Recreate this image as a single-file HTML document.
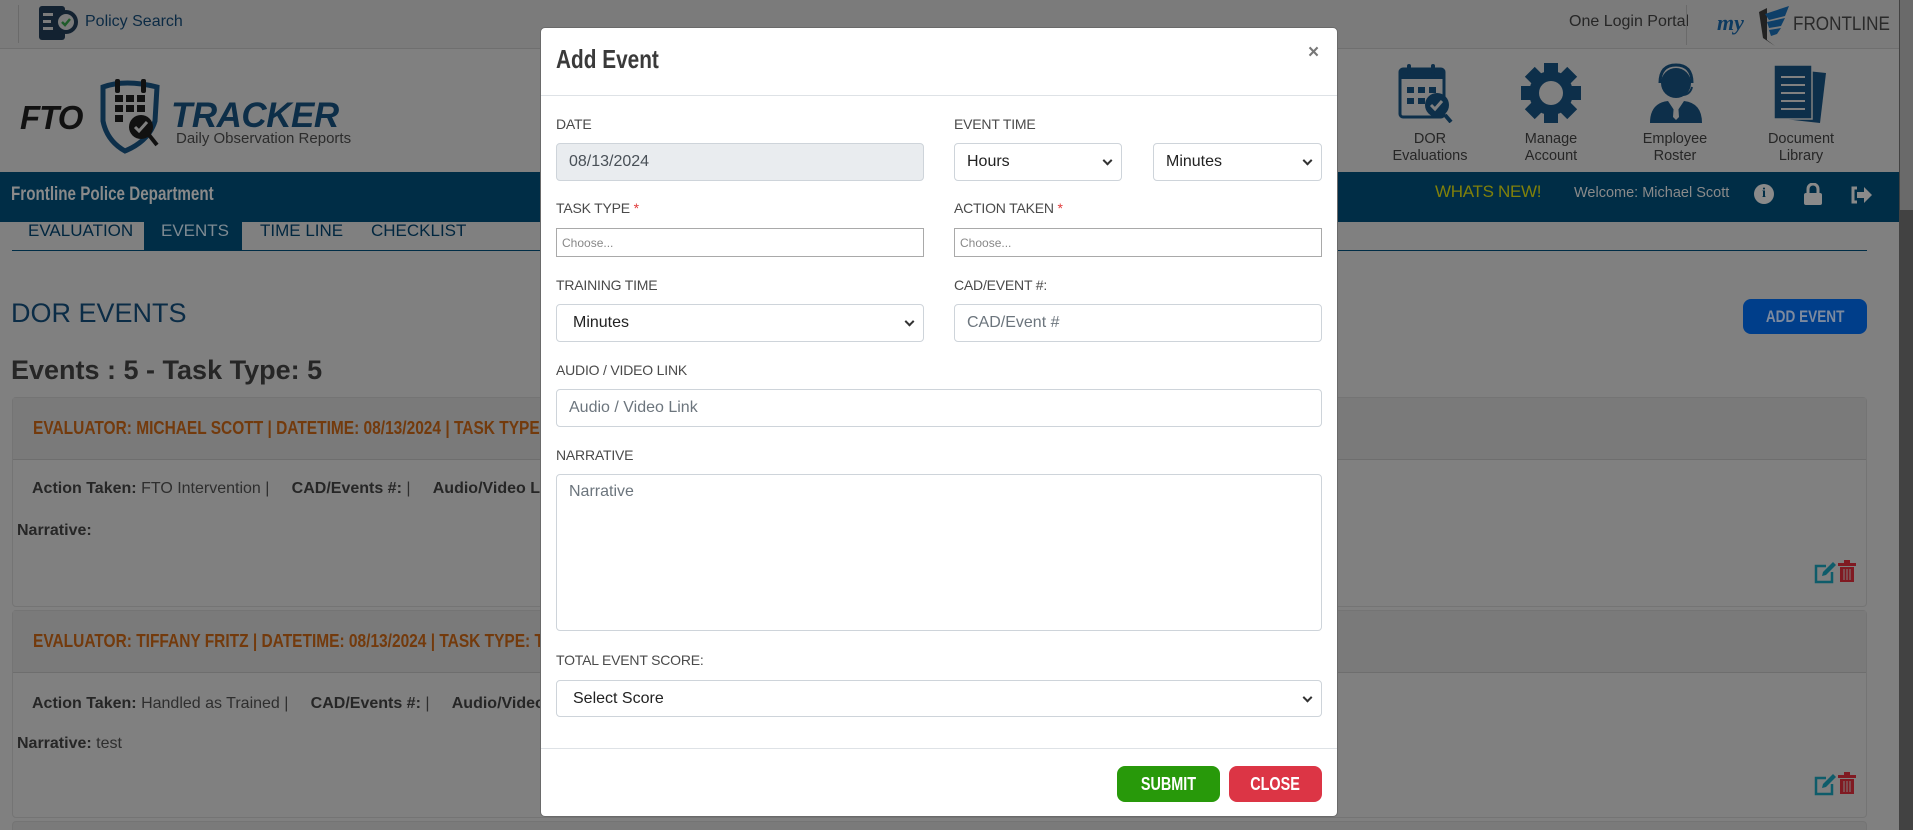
<!DOCTYPE html>
<html><head><meta charset="utf-8">
<style>
*{box-sizing:border-box;margin:0;padding:0}
html,body{width:1913px;height:830px;overflow:hidden}
body{background:#808080;font-family:"Liberation Sans",Arial,sans-serif;position:relative}
#w{position:absolute;left:0;top:0;width:1913px;height:830px;overflow:hidden}
.a{position:absolute;white-space:nowrap}
.cond{font-weight:bold;display:inline-block;transform:scaleX(.8);transform-origin:left center}
.cc{font-weight:bold;display:inline-block;transform:scaleX(.8);transform-origin:center center}
.lbl{position:absolute;font-size:14px;color:#4a4a4a;letter-spacing:-0.2px;white-space:nowrap}
.inp{position:absolute;border:1px solid #ced4da;border-radius:4px;background:#fff;font-size:16px;color:#495057;padding-left:12px;display:flex;align-items:center}
.sel::after{content:"";position:absolute;right:10px;top:50%;width:5px;height:5px;border-right:2px solid #333;border-bottom:2px solid #333;transform:translateY(-70%) rotate(45deg)}
.choose{position:absolute;border:1px solid #a9a9a9;background:#fff;font-size:12px;color:#888;padding-left:5px;display:flex;align-items:center}
.star{color:#e03a3a}
.card{position:absolute;left:12px;width:1855px;border:1px solid #747474;border-radius:4px;background:#808080}
.ch{height:62px;background:#7a7a7a;border-bottom:1px solid #6e6e6e;position:relative}
.ct{position:absolute;left:20px;top:20px;color:#733a0c;font-size:18px;white-space:nowrap}
.ct .cond{transform:scaleX(.86)}
.b{font-weight:bold;color:#262626}
.t{color:#2e2e2e}
.nav{position:absolute;top:221px;font-size:17px;color:#00263f}
</style></head><body><div id="w">
<div class="a" style="left:0;top:0;width:1899px;height:49px;background:#7b7b7b;border-bottom:1px solid #6f6f6f"></div>
<div class="a" style="left:18px;top:5px;width:1px;height:38px;background:#6a6a6a"></div>
<svg class="a" style="left:38px;top:5px" width="42" height="36" viewBox="0 0 42 36"><rect x="1" y="1" width="26" height="34" rx="3" fill="#132231"/><rect x="5" y="8" width="10" height="3" fill="#7b7b7b"/><rect x="5" y="15" width="8" height="3" fill="#7b7b7b"/><rect x="5" y="22" width="10" height="3" fill="#7b7b7b"/><circle cx="28" cy="17" r="12" fill="#132231"/><circle cx="28" cy="17" r="8" fill="#7b7b7b"/><path d="M24 17l3 3 5-6" stroke="#1f5b2a" stroke-width="2.5" fill="none"/></svg>
<div class="a" style="left:85px;top:13px;font-size:16px;color:#0b2a44">Policy Search</div>
<div class="a" style="left:1569px;top:13px;font-size:16px;color:#262626">One Login Portal</div>
<div class="a" style="left:1686px;top:5px;width:1px;height:40px;background:#6a6a6a"></div>
<div class="a" style="left:1717px;top:10px;font-size:22px;font-style:italic;font-weight:bold;color:#0d3a60;font-family:'Liberation Serif',serif">my</div>
<svg class="a" style="left:1755px;top:4px" width="36" height="44" viewBox="0 0 36 44"><path d="M4 8 L12 4 L12 36 L20 42 L8 34 Z" fill="#222"/><path d="M10 10 L34 2 L30 12 L14 16Z M12 18 L30 14 L26 22 L14 24Z M14 26 L26 24 L22 30 L16 32Z" fill="#0e3f68"/></svg>
<div class="a" style="left:1793px;top:14px;font-size:19px;color:#2a2a2a"><span style="display:inline-block;transform:scaleX(.9);transform-origin:left">FRONTLINE</span></div>
<div class="a" style="left:20px;top:99px;font-size:33px;font-weight:bold;font-style:italic;color:#111;letter-spacing:-1px">FTO</div>
<svg class="a" style="left:95px;top:75px" width="76" height="80" viewBox="0 0 76 80"><path d="M8 12 Q30 4 62 12 L60 46 Q54 66 30 76 Q12 66 8 46Z" fill="none" stroke="#0d2f4a" stroke-width="5"/><rect x="16" y="14" width="40" height="38" fill="#808080"/><rect x="20" y="4" width="5" height="14" rx="2" fill="#111"/><rect x="46" y="4" width="5" height="14" rx="2" fill="#111"/><g fill="#111"><rect x="20" y="20" width="8" height="7"/><rect x="31" y="20" width="8" height="7"/><rect x="42" y="20" width="8" height="7"/><rect x="20" y="30" width="8" height="7"/><rect x="31" y="30" width="8" height="7"/><rect x="42" y="30" width="8" height="7"/><rect x="20" y="40" width="8" height="7"/></g><circle cx="46" cy="52" r="12" fill="#111"/><path d="M40 52l4 4 8-9" stroke="#808080" stroke-width="3" fill="none"/><path d="M54 60 L62 70" stroke="#111" stroke-width="4"/></svg>
<div class="a" style="left:171px;top:96px;font-size:35px;font-weight:bold;font-style:italic;color:#0d2e48;letter-spacing:-0.5px">TRACKER</div>
<div class="a" style="left:176px;top:130px;font-size:15px;color:#2c2c2c">Daily Observation Reports</div>
<svg class="a" style="left:1397px;top:63px" width="56" height="60" viewBox="0 0 56 60"><rect x="3" y="6" width="44" height="48" rx="3" fill="none" stroke="#0d2f4a" stroke-width="3"/><rect x="3" y="6" width="44" height="10" fill="#0d2f4a"/><rect x="10" y="1" width="4" height="10" rx="2" fill="#0d2f4a"/><rect x="34" y="1" width="4" height="10" rx="2" fill="#0d2f4a"/><g fill="#0d2f4a"><rect x="10" y="24" width="7" height="6"/><rect x="21" y="24" width="7" height="6"/><rect x="32" y="24" width="7" height="6"/><rect x="10" y="35" width="7" height="6"/><rect x="21" y="35" width="7" height="6"/></g><circle cx="40" cy="42" r="12" fill="#0d2f4a"/><path d="M34 42l4 4 7-8" stroke="#808080" stroke-width="3" fill="none"/><path d="M48 52l6 7" stroke="#0d2f4a" stroke-width="4"/></svg>
<svg class="a" style="left:1521px;top:63px" width="60" height="60" viewBox="0 0 60 60"><g fill="#0d2f4a" transform="translate(30 30)"><circle r="22"/><rect x="-7" y="-30" width="14" height="60"/><rect x="-7" y="-30" width="14" height="60" transform="rotate(45)"/><rect x="-7" y="-30" width="14" height="60" transform="rotate(90)"/><rect x="-7" y="-30" width="14" height="60" transform="rotate(135)"/></g><circle cx="30" cy="30" r="12" fill="#808080"/></svg>
<svg class="a" style="left:1648px;top:63px" width="56" height="60" viewBox="0 0 56 60"><circle cx="28" cy="20" r="15" fill="#0d2f4a"/><path d="M12 20 Q12 2 28 2 Q44 2 44 20" fill="none" stroke="#0d2f4a" stroke-width="3"/><path d="M44 24 Q42 32 34 32" fill="none" stroke="#0d2f4a" stroke-width="2"/><path d="M2 60 Q2 40 20 38 L28 50 L36 38 Q54 40 54 60Z" fill="#0d2f4a"/><path d="M26 40 L30 40 L31 54 L28 57 L25 54Z" fill="#808080"/></svg>
<svg class="a" style="left:1772px;top:63px" width="60" height="62" viewBox="0 0 60 62"><path d="M16 6 L54 10 L48 60 L12 56Z" fill="#0d2f4a"/><path d="M2 2 L40 2 L40 56 L2 56Z" fill="#0d2f4a" stroke="#808080" stroke-width="1.5"/><g stroke="#808080" stroke-width="2"><path d="M9 14h24M9 22h24M9 30h24M9 38h24M9 46h24"/></g></svg>
<div class="a" style="left:1380px;top:131px;width:100px;text-align:center;font-size:14.5px;line-height:17px;color:#262626">DOR<br>Evaluations</div>
<div class="a" style="left:1501px;top:131px;width:100px;text-align:center;font-size:14.5px;line-height:17px;color:#262626">Manage<br>Account</div>
<div class="a" style="left:1625px;top:131px;width:100px;text-align:center;font-size:14.5px;line-height:17px;color:#262626">Employee<br>Roster</div>
<div class="a" style="left:1751px;top:131px;width:100px;text-align:center;font-size:14.5px;line-height:17px;color:#262626">Document<br>Library</div>
<div class="a" style="left:0;top:172px;width:1899px;height:50px;background:#002d46"></div>
<div class="a" style="left:11px;top:184px;font-size:19px;color:#8a8a8a"><span class="cond">Frontline Police Department</span></div>
<div class="a" style="left:1435px;top:182px;font-size:17px;color:#80800a;letter-spacing:-0.3px">WHATS NEW!</div>
<div class="a" style="left:1574px;top:185px;font-size:14.5px;color:#8a8a8a">Welcome: Michael Scott</div>
<div class="a" style="left:1754px;top:184px;width:20px;height:20px;border-radius:50%;background:#8a8a8a;color:#002d46;font-weight:bold;font-size:14px;text-align:center;line-height:20px;font-family:'Liberation Serif',serif">i</div>
<svg class="a" style="left:1803px;top:183px" width="20" height="22" viewBox="0 0 20 22"><path d="M5 10V6a5 5 0 0 1 10 0v4" stroke="#8a8a8a" stroke-width="3" fill="none"/><rect x="1" y="10" width="18" height="12" rx="2" fill="#8a8a8a"/></svg>
<svg class="a" style="left:1850px;top:186px" width="22" height="18" viewBox="0 0 22 18"><path d="M7 2H3v14h4" stroke="#8a8a8a" stroke-width="3" fill="none"/><path d="M7 6h7V1l8 8-8 8v-5H7z" fill="#8a8a8a"/></svg>
<div class="a" style="left:144px;top:221px;width:98px;height:29px;background:#002d46"></div>
<div class="nav" style="left:28px">EVALUATION</div>
<div class="nav" style="left:161px;color:#7e8a92">EVENTS</div>
<div class="nav" style="left:260px">TIME LINE</div>
<div class="nav" style="left:371px">CHECKLIST</div>
<div class="a" style="left:12px;top:250px;width:1855px;height:1px;background:#002d46"></div>
<div class="a" style="left:11px;top:298px;font-size:27px;color:#0b2c46">DOR EVENTS</div>
<div class="a" style="left:11px;top:355px;font-size:27px;font-weight:bold;color:#262626">Events : 5 - Task Type: 5</div>
<div class="a" style="left:1743px;top:299px;width:124px;height:35px;border-radius:8px;background:#003e8a;color:#7d8a9e;font-size:17px;text-align:center;line-height:35px"><span class="cc">ADD EVENT</span></div>
<div class="card" style="top:397px;height:210px"><div class="ch"><div class="ct"><span class="cond">EVALUATOR: MICHAEL SCOTT | DATETIME: 08/13/2024 | TASK TYPE: FINGERPRINT</span></div></div>
<div class="a" style="left:19px;top:82px;font-size:16px"><span class="b">Action Taken:</span> <span class="t">FTO Intervention |</span> &nbsp; &nbsp; <span class="b">CAD/Events #:</span> <span class="t">|</span> &nbsp; &nbsp; <span class="b">Audio/Video Link:</span></div>
<div class="a" style="left:4px;top:124px;font-size:16px"><span class="b">Narrative:</span></div>
<svg class="a" style="left:1801px;top:164px" width="22" height="22" viewBox="0 0 22 22"><path d="M12 4H2v16h16V10" stroke="#0e5c6a" stroke-width="2.5" fill="none"/><path d="M8 14l1-4 10-10 3 3-10 10z" fill="#0e5c6a"/></svg>
<svg class="a" style="left:1825px;top:162px" width="18" height="22" viewBox="0 0 18 22"><rect x="0" y="3" width="18" height="3" fill="#801a22"/><rect x="6" y="0" width="6" height="3" fill="#801a22"/><rect x="2" y="7" width="14" height="15" fill="#801a22"/><path d="M6 9v11M9 9v11M12 9v11" stroke="#7f7f7f" stroke-width="1"/></svg>
</div>
<div class="card" style="top:610px;height:208px"><div class="ch"><div class="ct"><span class="cond">EVALUATOR: TIFFANY FRITZ | DATETIME: 08/13/2024 | TASK TYPE: TRAFFIC STOP</span></div></div>
<div class="a" style="left:19px;top:84px;font-size:16px"><span class="b">Action Taken:</span> <span class="t">Handled as Trained |</span> &nbsp; &nbsp; <span class="b">CAD/Events #:</span> <span class="t">|</span> &nbsp; &nbsp; <span class="b">Audio/Video Link:</span></div>
<div class="a" style="left:4px;top:124px;font-size:16px"><span class="b">Narrative:</span> <span class="t">test</span></div>
<svg class="a" style="left:1801px;top:163px" width="22" height="22" viewBox="0 0 22 22"><path d="M12 4H2v16h16V10" stroke="#0e5c6a" stroke-width="2.5" fill="none"/><path d="M8 14l1-4 10-10 3 3-10 10z" fill="#0e5c6a"/></svg>
<svg class="a" style="left:1825px;top:161px" width="18" height="22" viewBox="0 0 18 22"><rect x="0" y="3" width="18" height="3" fill="#801a22"/><rect x="6" y="0" width="6" height="3" fill="#801a22"/><rect x="2" y="7" width="14" height="15" fill="#801a22"/><path d="M6 9v11M9 9v11M12 9v11" stroke="#7f7f7f" stroke-width="1"/></svg>
</div>
<div class="a" style="left:12px;top:821px;width:1855px;height:9px;border:1px solid #747474;border-bottom:none;border-radius:4px 4px 0 0;background:#7a7a7a"></div>
<div class="a" style="left:1899px;top:0;width:14px;height:830px;background:#424242"></div>
<div class="a" style="left:1900px;top:0;width:13px;height:210px;background:#6a6a6a"></div>
<div class="a" style="left:540px;top:27px;width:798px;height:790px;background:#fff;border-radius:5px;border:1px solid #6a6a6a"></div>
<div class="a" style="left:556px;top:44px;font-size:26px;color:#3a3a3a"><span class="cond">Add Event</span></div>
<div class="a" style="left:1308px;top:42px;font-size:19px;font-weight:bold;color:#777">×</div>
<div class="a" style="left:541px;top:95px;width:796px;height:1px;background:#dee2e6"></div>
<div class="lbl" style="left:556px;top:116px">DATE</div>
<div class="lbl" style="left:954px;top:116px">EVENT TIME</div>
<div class="inp" style="left:556px;top:143px;width:368px;height:38px;background:#e9ecef">08/13/2024</div>
<div class="inp sel" style="left:954px;top:143px;width:168px;height:38px;color:#222">Hours</div>
<div class="inp sel" style="left:1153px;top:143px;width:169px;height:38px;color:#222">Minutes</div>
<div class="lbl" style="left:556px;top:200px">TASK TYPE <span class="star">*</span></div>
<div class="lbl" style="left:954px;top:200px">ACTION TAKEN <span class="star">*</span></div>
<div class="choose" style="left:556px;top:228px;width:368px;height:29px">Choose...</div>
<div class="choose" style="left:954px;top:228px;width:368px;height:29px">Choose...</div>
<div class="lbl" style="left:556px;top:277px">TRAINING TIME</div>
<div class="lbl" style="left:954px;top:277px">CAD/EVENT #:</div>
<div class="inp sel" style="left:556px;top:304px;width:368px;height:38px;color:#222;padding-left:16px">Minutes</div>
<div class="inp" style="left:954px;top:304px;width:368px;height:38px;color:#6c757d">CAD/Event #</div>
<div class="lbl" style="left:556px;top:362px">AUDIO / VIDEO LINK</div>
<div class="inp" style="left:556px;top:389px;width:766px;height:38px;color:#6c757d">Audio / Video Link</div>
<div class="lbl" style="left:556px;top:447px">NARRATIVE</div>
<div class="inp" style="left:556px;top:474px;width:766px;height:157px;color:#6c757d;align-items:flex-start;padding-top:8px">Narrative</div>
<div class="lbl" style="left:556px;top:652px">TOTAL EVENT SCORE:</div>
<div class="inp sel" style="left:556px;top:680px;width:766px;height:37px;color:#222;padding-left:16px">Select Score</div>
<div class="a" style="left:541px;top:748px;width:796px;height:1px;background:#dee2e6"></div>
<div class="a" style="left:1117px;top:766px;width:103px;height:36px;border-radius:8px;background:#28990a;color:#fff;font-size:18px;text-align:center;line-height:36px"><span class="cc">SUBMIT</span></div>
<div class="a" style="left:1229px;top:766px;width:93px;height:36px;border-radius:8px;background:#dc3545;color:#fff;font-size:18px;text-align:center;line-height:36px"><span class="cc">CLOSE</span></div>
</div></body></html>
